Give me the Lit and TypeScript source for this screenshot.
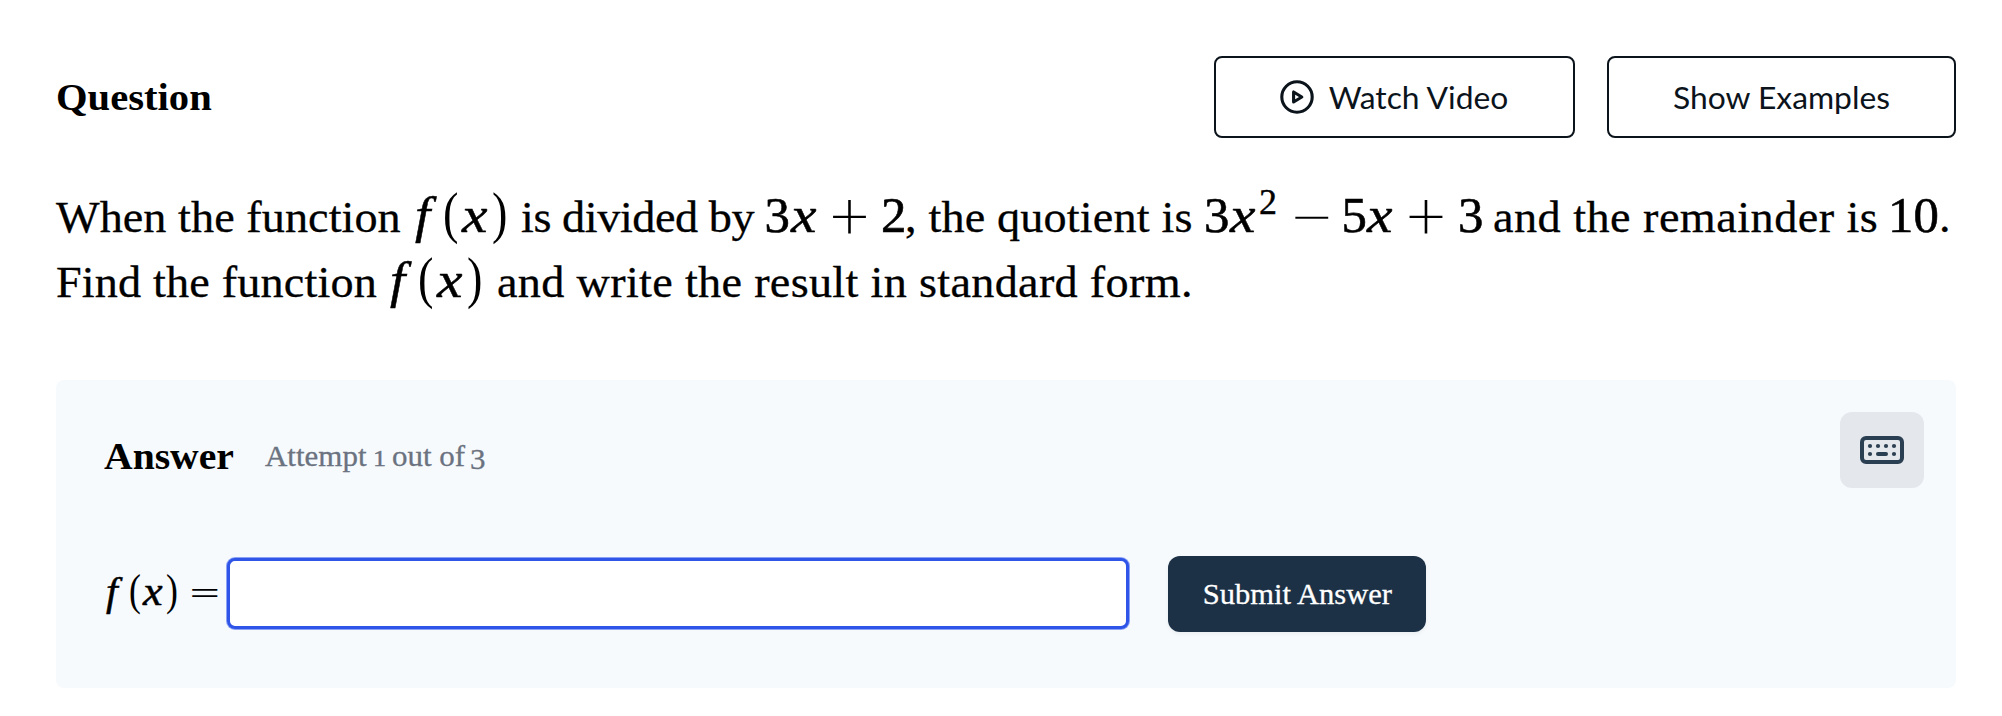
import { LitElement, html, css } from 'lit';
import { customElement } from 'lit/decorators.js';

/** kind, text, advance in px, optional letter spacing in px */
type Cell = [kind: string, text: string, advance: number, spacing?: number];

const LINE_ONE: Cell[] = [
  ['t', 'When the function', 359, 0.05],
  ['f', 'f', 28],
  ['p', '(', 19],
  ['x', 'x', 30],
  ['p', ')', 28.5],
  ['t', 'is divided by', 244, -0.4],
  ['n', '3', 26],
  ['x', 'x', 37],
  ['o', '+', 53.5],
  ['n', '2', 24],
  ['t', ', the quotient is', 299, 0.15],
  ['n', '3', 25.5],
  ['x', 'x', 29.5],
  ['s', '2', 31],
  ['o', '−', 51.5],
  ['n', '5', 25.5],
  ['x', 'x', 37],
  ['o', '+', 54],
  ['n', '3', 34.5],
  ['t', 'and the remainder is', 395.5, 0.45],
  ['n', '10', 50.5],
  ['t', '.', 10],
];

const LINE_TWO: Cell[] = [
  ['t', 'Find the function', 334, 0.15],
  ['f', 'f', 28],
  ['p', '(', 19],
  ['x', 'x', 30],
  ['p', ')', 29.5],
  ['t', 'and write the result in standard form.', 700, 0.3],
];

const LABEL: Cell[] = [
  ['f', 'f', 22.5],
  ['p', '(', 14],
  ['x', 'x', 23],
  ['p', ')', 22.5],
  ['o', '=', 32],
];

const ATTEMPT: Cell[] = [
  ['t', 'Attempt', 108],
  ['one', '1', 19],
  ['t', 'out of', 78],
  ['three', '3', 16],
];

const cells = (list: Cell[]) =>
  list.map(
    ([kind, text, advance, spacing = 0]) =>
      html`<span class="cell ${kind}" style="width:${advance}px;letter-spacing:${spacing}px"><span class="g">${text}</span></span>`,
  );

@customElement('app-root')
export class AppRoot extends LitElement {
  static styles = css`
    :host {
      display: block;
      box-sizing: border-box;
      height: 716px;
      padding: 56px 46px 0 56px;
      background: #fff;
      color: #000;
      font-family: 'Liberation Serif', serif;
      overflow: hidden;
    }
    * { box-sizing: border-box; }
    .header { display: flex; align-items: center; height: 82px; }
    .title {
      margin: 0;
      font-size: 38.5px;
      line-height: 44px;
      font-weight: 700;
      transform-origin: 0 50%;
      transform: scaleX(1.055);
    }
    .actions { display: flex; gap: 32px; margin-left: auto; }
    .outline {
      display: flex;
      align-items: center;
      justify-content: center;
      height: 82px;
      padding: 0 0 1px;
      border: 2px solid #0b131b;
      border-radius: 8px;
      background: #fff;
      color: #0b131b;
      font: 400 31.8px/40px Lato, sans-serif;
    }
    .watch { width: 361px; gap: 15px; padding-right: 1px; }
    .examples { width: 349px; }
    .play { display: block; width: 34px; height: 34px; }

    .statement { margin-top: 43px; font-size: 44px; }
    .math { display: flex; align-items: baseline; white-space: pre; }
    .statement .math { height: 65px; line-height: 65px; }
    .cell { flex: none; display: block; }
    .g { display: inline-block; transform-origin: 0 50%; }
    .t .g { transform: scaleX(1.05); -webkit-text-stroke: 0.3px currentColor; }
    .math .n { font-size: 50.8px; -webkit-text-stroke: 0.6px #000; }
    .math .s .g {
      font-size: 36px;
      line-height: 40px;
      position: relative;
      top: -18px;
      -webkit-text-stroke: 0.4px #000;
    }
    .math .f { font-size: 50.8px; font-style: italic; }
    .math .x { font-size: 50.8px; font-style: italic; }
    .math .x .g { transform: scaleX(1.13); -webkit-text-stroke: 0.5px #000; }
    .math .f .g { transform: scaleX(1.08); -webkit-text-stroke: 0.5px #000; }
    .math .p { font-size: 56.5px; }
    .math .p .g { transform: scaleX(0.82); }
    .math .o { font: 200 52.5px/65px 'DejaVu Sans', sans-serif; }
    .math .o .g { transform: translateY(2px); }

    .panel {
      width: 1900px;
      height: 308px;
      margin-top: 69px;
      padding: 32px 32px 0 48px;
      border-radius: 8px;
      background: #f6fafd;
    }
    .bar { display: flex; height: 76px; align-items: flex-start; }
    .bar .title { margin-top: 22px; width: 161px; transform: scaleX(1.03); }
    .attempt {
      display: flex;
      align-items: baseline;
      margin-top: 24px;
      font-size: 29.5px;
      line-height: 40px;
      color: #6b7280;
    }
    .attempt .one { font-size: 24px; -webkit-text-stroke: 0.4px #6b7280; }
    .attempt .one .g { transform: scaleX(1.1); }
    .attempt .three .g { transform: translateY(3px) scaleX(1.05); -webkit-text-stroke: 0.3px #6b7280; }
    .keyboard {
      display: flex;
      align-items: center;
      justify-content: center;
      width: 84px;
      height: 76px;
      margin-left: auto;
      padding: 0;
      border: 0;
      border-radius: 12px;
      background: #e4e7ec;
    }
    .keyboard svg { display: block; width: 44px; height: 28px; }
    .form { display: flex; align-items: center; height: 76px; margin-top: 68px; }
    .label { height: 60px; line-height: 60px; width: 123px; padding-left: 2px; margin-top: -8px; }
    .math.label .f, .math.label .x { font-size: 39px; }
    .math.label .p { font-size: 43.5px; }
    .math.label .o { font: 200 40px/60px 'DejaVu Sans', sans-serif; }
    .math.label .o .g { transform: translateY(1px); }
    .field {
      width: 902px;
      height: 71px;
      margin-top: -1px;
      border: 3px solid #2e54e8;
      border-radius: 8px;
      background: #fff;
      box-shadow: 0 0 0 1px rgba(70, 105, 240, 0.6);
      outline: none;
      font: 400 32px 'Liberation Serif', serif;
      padding: 0 12px;
    }
    .submit {
      width: 258px;
      height: 76px;
      margin-left: 39px;
      padding: 0;
      border: 0;
      border-radius: 12px;
      background: #1c3146;
      color: #fff;
      box-shadow: 0 2px 4px rgba(0, 0, 0, 0.05);
      font: 400 29.5px/40px 'Liberation Serif', serif;
    }
    .submit .g { transform-origin: 50% 50%; transform: scaleX(1.035); -webkit-text-stroke: 0.3px #fff; }
  `;

  render() {
    return html`
      <header class="header">
        <h2 class="title">Question</h2>
        <div class="actions">
          <button class="outline watch">
            <svg class="play" viewBox="0 0 34 34" fill="none" stroke="#0b131b" stroke-linejoin="round">
              <circle cx="17" cy="17" r="15.2" stroke-width="3.1" />
              <path d="M13.6 12v10l8.2-5z" stroke-width="3.1" />
            </svg>
            <span>Watch Video</span>
          </button>
          <button class="outline examples">Show Examples</button>
        </div>
      </header>
      <section class="statement">
        <div class="math">${cells(LINE_ONE)}</div>
        <div class="math">${cells(LINE_TWO)}</div>
      </section>
      <section class="panel">
        <div class="bar">
          <h2 class="title">Answer</h2>
          <div class="attempt">${cells(ATTEMPT)}</div>
          <button class="keyboard" aria-label="Toggle keyboard">
            <svg viewBox="0 0 44 28" fill="#2b3f52">
              <rect x="2" y="2" width="40" height="24" rx="4" fill="none" stroke="#2b3f52" stroke-width="4" />
              <circle cx="10" cy="10" r="2.1" />
              <circle cx="18" cy="10" r="2.1" />
              <circle cx="26" cy="10" r="2.1" />
              <circle cx="34" cy="10" r="2.1" />
              <circle cx="10" cy="18" r="2.1" />
              <rect x="16" y="16" width="12" height="4" rx="2" />
              <circle cx="34" cy="18" r="2.1" />
            </svg>
          </button>
        </div>
        <div class="form">
          <div class="math label">${cells(LABEL)}</div>
          <input class="field" aria-label="f(x)" />
          <button class="submit"><span class="g">Submit Answer</span></button>
        </div>
      </section>
    `;
  }
}
